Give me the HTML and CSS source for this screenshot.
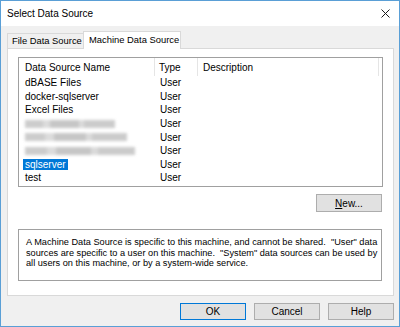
FILE: index.html
```html
<!DOCTYPE html>
<html>
<head>
<meta charset="utf-8">
<link rel="stylesheet" href="styles.css">
</head>
<body>
<div class="window">
  <div class="titlebar">
    <span class="title">Select Data Source</span>
    <svg class="close" width="9" height="9" viewBox="0 0 9 9"><path d="M0.5 0.5 L8.5 8.5 M8.5 0.5 L0.5 8.5" stroke="#1a1a1a" stroke-width="1" fill="none"/></svg>
  </div>
  <div class="body">
    <div class="tabs">
      <div class="tab">File Data Source</div>
      <div class="tab active">Machine Data Source</div>
    </div>
    <div class="panel">
      <div class="list">
        <div class="header">
          <div class="hcell c1">Data Source Name</div>
          <div class="hcell c2">Type</div>
          <div class="hcell c3">Description</div>
        </div>
        <div class="row"><span class="c1"><span class="name">dBASE Files</span></span><span class="c2">User</span></div>
        <div class="row"><span class="c1"><span class="name">docker-sqlserver</span></span><span class="c2">User</span></div>
        <div class="row"><span class="c1"><span class="name">Excel Files</span></span><span class="c2">User</span></div>
        <div class="row"><span class="c1"><span class="blur w1"></span></span><span class="c2">User</span></div>
        <div class="row"><span class="c1"><span class="blur w2"></span></span><span class="c2">User</span></div>
        <div class="row"><span class="c1"><span class="blur w3"></span></span><span class="c2">User</span></div>
        <div class="row"><span class="c1"><span class="name selected">sqlserver</span></span><span class="c2">User</span></div>
        <div class="row"><span class="c1"><span class="name">test</span></span><span class="c2">User</span></div>
      </div>
      <div class="newrow">
        <button class="btn"><u>N</u>ew...</button>
      </div>
      <div class="desc">A Machine Data Source is specific to this machine, and cannot be shared.&nbsp; "User" data<br>sources are specific to a user on this machine.&nbsp; "System" data sources can be used by<br>all users on this machine, or by a system-wide service.</div>
    </div>
    <div class="buttons">
      <button class="btn default">OK</button>
      <button class="btn">Cancel</button>
      <button class="btn">Help</button>
    </div>
  </div>
</div>
</body>
</html>
```
FILE: styles.css
```css
* { box-sizing: border-box; }
html, body { margin: 0; padding: 0; }
body {
  font-family: "Liberation Sans", Arial, sans-serif;
  font-size: 10px;
  color: #000;
  background: #fff;
}
.window {
  width: 400px;
  height: 327px;
  border: 1px solid #5a9fd6;
  display: flex;
  flex-direction: column;
  background: #f0f0f0;
}
.titlebar {
  height: 25px;
  background: #fff;
  display: flex;
  align-items: center;
  justify-content: space-between;
  padding: 0 9px 0 6px;
  flex-shrink: 0;
}
.title { font-size: 10px; color: #000; }
.close { display: block; }
.body {
  flex: 1;
  display: flex;
  flex-direction: column;
  padding: 5px 5px 0 6px;
}
.tabs {
  display: flex;
  align-items: flex-end;
  height: 17px;
  position: relative;
  z-index: 1;
}
.tab {
  height: 15px;
  padding: 0 0 0 4px;
  border: 1px solid #d9d9d9;
  border-bottom: none;
  background: #f0f0f0;
  display: flex;
  align-items: center;
  font-size: 9.4px;
  line-height: 1;
  white-space: nowrap;
  flex-shrink: 0;
}
.tab:first-child { width: 76px; border-right: none; }
.tab.active {
  height: 18px;
  width: 98px;
  background: #fff;
  border-left: 1px solid #d9d9d9;
  margin-bottom: -1px;
  padding: 0 0 2px 5px;
}
.panel {
  height: 248px;
  background: #fff;
  border: 1px solid #d9d9d9;
  padding: 8px 10px 0 10px;
  display: flex;
  flex-direction: column;
}
.list {
  height: 130px;
  border: 1px solid #a0a0a0;
  padding: 0 3px 0 2px;
}
.header {
  display: flex;
  height: 18px;
  align-items: stretch;
}
.hcell {
  display: flex;
  align-items: center;
  padding-left: 4px;
  border-right: 1px solid #e5e5e5;
  white-space: nowrap;
}
.header .c1 { width: 134px; }
.header .c2 { width: 43px; }
.header .c3 { flex: 1; padding-left: 5px; }
.row {
  display: flex;
  height: 13.6px;
  align-items: center;
}
.row .c1 { width: 134px; padding-left: 2px; display: flex; align-items: center; }
.row .c2 { padding-left: 5px; }
.name { padding: 0 2px; line-height: 11px; }
.selected { background: #0078d7; color: #fff; }
.blur {
  display: block;
  height: 8px;
  background: linear-gradient(90deg, #c4c4c4 0 20%, #d6d6d6 20% 28%, #bdbdbd 28% 60%, #d4d4d4 60% 66%, #c3c3c3 66% 100%);
  filter: blur(1.6px);
  margin-left: 2px;
  opacity: 0.85;
}
.w1 { width: 90px; }
.w2 { width: 102px; }
.w3 { width: 110px; }
.newrow {
  display: flex;
  justify-content: flex-end;
  margin-top: 7px;
  padding-right: 1px;
}
.btn {
  font-family: "Liberation Sans", Arial, sans-serif;
  font-size: 10px;
  width: 66px;
  height: 18px;
  background: #e1e1e1;
  border: 1px solid #adadad;
  color: #000;
  padding: 0;
  margin: 0;
}
.btn.default { border-color: #0078d7; }
.desc {
  margin-top: 17px;
  margin-right: 1px;
  height: 52px;
  border: 1px solid #a0a0a0;
  padding: 7px 4px 0 7px;
  line-height: 10.6px;
  font-size: 9.2px;
  white-space: nowrap;
  overflow: hidden;
}
.buttons {
  display: flex;
  justify-content: flex-end;
  gap: 7px;
  margin-top: 7px;
}
.buttons .btn { height: 17px; }
.buttons .btn + .btn { margin-left: 1px; }
```
